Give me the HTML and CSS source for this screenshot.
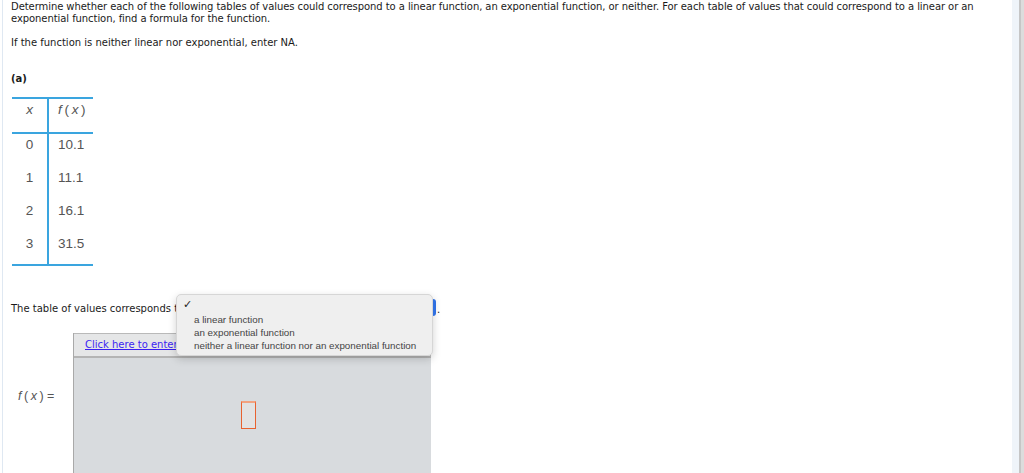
FILE: index.html
```html
<!doctype html>
<html lang="en">
<head>
    <meta charset="UTF-8">
    <meta name="viewport" content="width=device-width, initial-scale=1.0">
    <title>Linear or exponential</title>
    <link rel="stylesheet" href="styles.css">
</head>
<body>
    <div class="page">
        <div class="content">
            <p class="question">Determine whether each of the following tables of values could correspond to a linear function, an exponential function, or neither. For each table of values that could correspond to a linear or an exponential function, find a formula for the function.</p>
            <p class="note">If the function is neither linear nor exponential, enter NA.</p>
            <p class="part">(a)</p>

            <table class="values">
                <thead>
                    <tr><th class="col-x"><i>x</i></th><th class="col-f"><i>f</i>&thinsp;(&thinsp;<i>x</i>&thinsp;)</th></tr>
                </thead>
                <tbody>
                    <tr><td class="col-x">0</td><td class="col-f">10.1</td></tr>
                    <tr><td class="col-x">1</td><td class="col-f">11.1</td></tr>
                    <tr><td class="col-x">2</td><td class="col-f">16.1</td></tr>
                    <tr><td class="col-x">3</td><td class="col-f">31.5</td></tr>
                </tbody>
            </table>

            <div class="answer-line">
                <span>The table of values corresponds t</span>
                <span class="select-box"></span>
                <span class="dot">.</span>
                <!-- open select menu -->
                <div class="menu">
                    <div class="menu-item checked">&#10003;</div>
                    <div class="menu-item">a linear function</div>
                    <div class="menu-item">an exponential function</div>
                    <div class="menu-item">neither a linear function nor an exponential function</div>
                </div>
            </div>

            <div class="formula">
                <div class="label"><i>f</i>&thinsp;(&thinsp;<i>x</i>&thinsp;) =</div>
                <div class="editor">
                    <div class="editor-head"><a href="#">Click here to enter or edit your answer</a></div>
                    <div class="editor-body">
                        <span class="caret-box"></span>
                    </div>
                </div>
            </div>
        </div>
        <div class="scroll">
            <div class="scroll-track"></div>
            <div class="scroll-line"></div>
            <div class="scroll-edge"></div>
        </div>
    </div>
</body>
</html>
```

FILE: styles.css
```css
html,body{
    margin: 0;
    height: 100%;
    background: #fff;
}
.page{
    display: flex;
    height: 473px;
    overflow: hidden;
}
.content{
    flex: 1;
    border-left: 1px solid #dfe8f2;
    margin-left: 2px;
    padding-left: 8px;
    font-family: "DejaVu Sans", Verdana, sans-serif;
    font-size: 10px;
    color: #1a1a1a;
}
.question{
    margin: 0;
    padding-top: 1px;
    line-height: 12px;
    width: 980px;
    letter-spacing: -0.07px;
}
.note{
    margin: 12px 0 0 0;
    line-height: 12px;
}
.part{
    margin: 24px 0 0 0;
    line-height: 12px;
    font-weight: bold;
}
.values{
    margin: 12px 0 0 1px;
    border-collapse: collapse;
    font-family: "Liberation Sans", Arial, sans-serif;
    font-size: 13.5px;
    color: #555;
}
.values th,.values td{
    padding: 0;
    vertical-align: top;
    line-height: 14px;
    font-weight: normal;
}
.values th{
    padding-top: 4px;
    height: 29px;
    border-top: 2px solid #3aa5df;
    border-bottom: 2px solid #3aa5df;
}
.values td{
    padding-top: 4px;
    height: 29px;
}
.values tbody tr:last-child td{
    height: 27px;
    border-bottom: 2px solid #3aa5df;
}
.col-x{
    width: 35px;
    text-align: center;
    border-right: 2px solid #3aa5df;
}
.col-f{
    width: 35px;
    text-align: left;
    white-space: nowrap;
    padding-left: 9px !important;
}
.answer-line{
    position: relative;
    display: flex;
    align-items: center;
    margin-top: 33px;
    height: 18px;
    font-size: 10px;
}
.select-box{
    position: relative;
    z-index: 2;
    width: 256px;
    height: 17px;
    border-right: 3px solid #2f6fe0;
    border-radius: 3px;
    margin-left: -1px;
    margin-top: -2px;
}
.dot{
    margin-left: 1px;
    margin-top: 3px;
}
.menu{
    position: absolute;
    left: 165px;
    top: -5px;
    width: 252px;
    padding: 3px 0 3px 3px;
    background: #efefef;
    border: 1px solid #d6d6d6;
    border-radius: 5px;
    box-shadow: 0 3px 8px rgba(0,0,0,0.18);
    font-family: "Liberation Sans", Arial, sans-serif;
    font-size: 9.8px;
    color: #444;
}
.menu-item{
    line-height: 13px;
    padding-left: 14px;
}
.menu-item.checked{
    padding-left: 3px;
    height: 15px;
    font-size: 11px;
    color: #222;
}
.formula{
    display: flex;
    margin-top: 16px;
}
.label{
    width: 62px;
    padding: 56px 0 0 7px;
    box-sizing: border-box;
    white-space: nowrap;
    font-family: "Liberation Sans", Arial, sans-serif;
    font-size: 12.5px;
    color: #555;
}
.editor{
    width: 357px;
    height: 150px;
    border-left: 1px solid #a9a9a9;
    background: #d8dbde;
}
.editor-head{
    height: 22px;
    background: #e5e6e7;
    border-top: 1px solid #b9b9b9;
    border-bottom: 2px solid #b4b4b4;
    border-right: 1px solid #bdbdbd;
    padding-left: 11px;
    line-height: 21px;
    font-family: "DejaVu Sans", Verdana, sans-serif;
    font-size: 10px;
}
.editor-head a{
    color: #3b1ff2;
}
.editor-body{
    display: flex;
    justify-content: center;
    padding-top: 43px;
    padding-right: 9px;
}
.caret-box{
    width: 13px;
    height: 25px;
    border: 1px solid #e8622f;
    border-top: 2px solid #f2a27f;
    background: #e2e2e2;
}
.scroll{
    display: flex;
    width: 12px;
}
.scroll-track{
    width: 7px;
    background: #eff4f9;
}
.scroll-line{
    width: 2px;
    background: #c6c6c6;
}
.scroll-edge{
    flex: 1;
    background: #dcdcdc;
}
```
